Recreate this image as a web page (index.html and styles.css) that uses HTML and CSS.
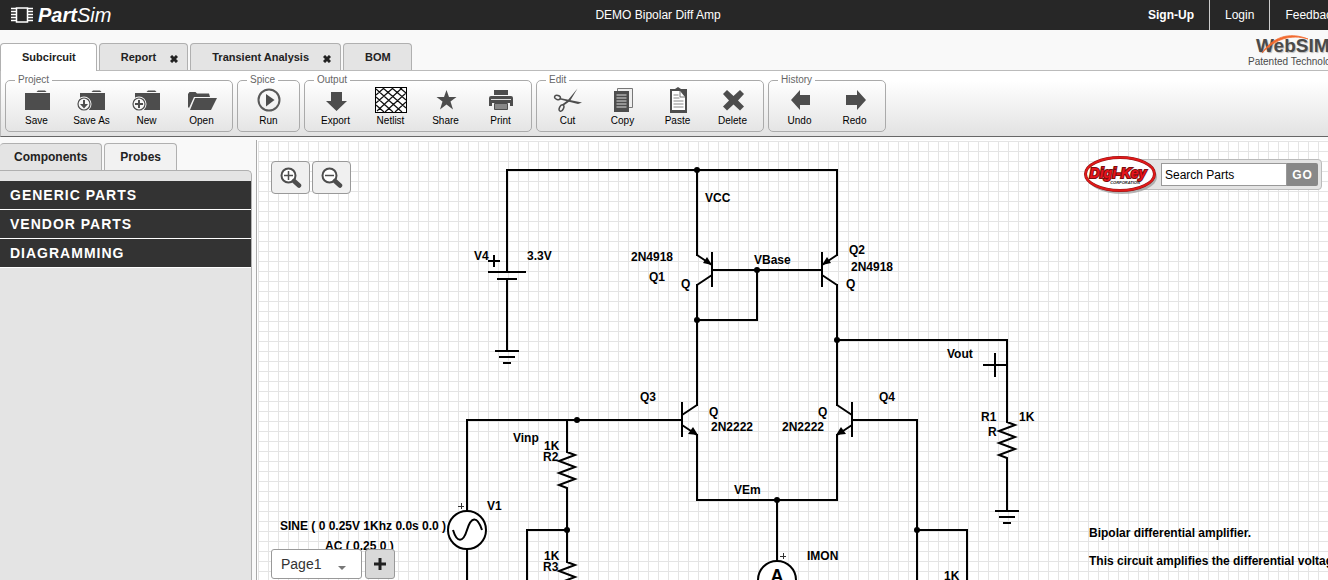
FILE: index.html
```
<!DOCTYPE html>
<html lang="en">
<head>
    <meta charset="UTF-8">
    <meta name="viewport" content="width=device-width, initial-scale=1.0">
    <title>PartSim - DEMO Bipolar Diff Amp</title>
    <link rel="stylesheet" href="styles.css">
</head>
<body>
    <header class="topbar">
        <a href="#" class="logo">
            <svg width="22" height="16" viewBox="0 0 22 16">
                <path d="M0 1.5h5M0 4.5h5M0 7.5h5M0 10.5h5M0 13.5h5M17 1.5h5M17 4.5h5M17 7.5h5M17 10.5h5M17 13.5h5" stroke="#fff" stroke-width="1.5"/>
                <rect x="5.5" y="1" width="11" height="14" fill="none" stroke="#fff" stroke-width="1.5"/>
            </svg>
            <span><b>Part</b>Sim</span>
        </a>
        <div class="project-name">DEMO Bipolar Diff Amp</div>
        <nav class="user-nav">
            <a href="#" class="signup">Sign-Up</a>
            <a href="#">Login</a>
            <a href="#">Feedback</a>
        </nav>
    </header>

    <div class="tabbar">
        <div class="tabs">
            <div class="tab active"><button class="tab-label">Subcircuit</button></div>
            <div class="tab"><button class="tab-label">Report</button><button class="tab-close" aria-label="Close Report"><svg width="8" height="8" viewBox="0 0 8 8"><path d="M1 1l6 6M7 1l-6 6"/></svg></button></div>
            <div class="tab"><button class="tab-label">Transient Analysis</button><button class="tab-close" aria-label="Close Transient Analysis"><svg width="8" height="8" viewBox="0 0 8 8"><path d="M1 1l6 6M7 1l-6 6"/></svg></button></div>
            <div class="tab"><button class="tab-label">BOM</button></div>
        </div>
        <div class="websim">
            <div class="websim-name">WebSIM
                <svg class="swoosh" width="54" height="20" viewBox="0 0 54 20"><path d="M0 19C10 4 26-3 46 5C28 0 14 5 0 19z" fill="#f26a2e" stroke="#f26a2e" stroke-width="0.800"/></svg>
            </div>
            <div class="websim-tag">Patented Technology</div>
        </div>
    </div>

    <div class="toolbar">
        <fieldset>
            <legend>Project</legend>
            <button class="tool">
                <svg viewBox="0 0 34 26"><path d="M5 6h25v17H5z"/><path d="M18 3.500h7l1.500 1.500h-10z"/></svg>
                Save
            </button>
            <button class="tool">
                <svg viewBox="0 0 34 26"><path d="M5 6h25v17H5z"/><path d="M18 3.500h7l1.500 1.500h-10z"/><circle cx="9" cy="17" r="7.500" fill="#f6f6f6"/><circle cx="9" cy="17" r="6" fill="#f6f6f6" stroke="#4d4d4d" stroke-width="1.200"/><path d="M8 13h2v4h3l-4 4.500-4-4.500h3z"/></svg>
                Save As
            </button>
            <button class="tool">
                <svg viewBox="0 0 34 26"><path d="M5 6h25v17H5z"/><path d="M18 3.500h7l1.500 1.500h-10z"/><circle cx="9" cy="17" r="7.500" fill="#f6f6f6"/><circle cx="9" cy="17" r="6" fill="#f6f6f6" stroke="#4d4d4d" stroke-width="1.200"/><path d="M5 16h3v-3h2v3h3v2h-3v3H8v-3H5z"/></svg>
                New
            </button>
            <button class="tool">
                <svg viewBox="0 0 34 26"><path d="M3 7l1.500-2h6l1.500 1.500h12l1 3.500H9L4 21l-1-1z"/><path d="M10 11h22l-6 12H5z"/></svg>
                Open
            </button>
        </fieldset>
        <fieldset>
            <legend>Spice</legend>
            <button class="tool">
                <svg viewBox="0 0 34 26"><circle cx="17" cy="13" r="10.500" fill="none" stroke="#5a5a5a" stroke-width="2"/><path d="M14 7l8.500 6-8.500 6.500z"/></svg>
                Run
            </button>
        </fieldset>
        <fieldset>
            <legend>Output</legend>
            <button class="tool">
                <svg viewBox="0 0 34 26"><path d="M12 5h11v9h5L17.500 24 7 14h5z"/></svg>
                Export
            </button>
            <button class="tool">
                <svg viewBox="0 0 34 26">
                    <rect x="1.500" y="0.500" width="31" height="25" fill="#fff" stroke="#000"/>
                    <path d="M2 18l8 7M2 10l17 15M2 2l26 23M9 1l23 20M18 1l14 12M26 1l6 5M2 8l8-7M2 16L19 1M3 24L28 1M11 25L32 6M21 25l11-10" fill="none" stroke="#111" stroke-width="1.200"/>
                </svg>
                Netlist
            </button>
            <button class="tool">
                <svg viewBox="0 0 34 26"><path d="M17.500 3l2.500 7h7.500l-6 4.500 2.500 8-6.500-5-6.500 5 2.500-8-6-4.500H15z"/></svg>
                Share
            </button>
            <button class="tool">
                <svg viewBox="0 0 34 26"><path d="M10 3h14v5H10z"/><path d="M7 9h20q2 0 2 2v8h-3v-3H8v3H5v-8q0-2 2-2z"/><path d="M7 12.500h20" stroke="#ddd"/><path d="M10.500 16.500h13v6h-13z" fill="#888" stroke="#4d4d4d"/></svg>
                Print
            </button>
        </fieldset>
        <fieldset>
            <legend>Edit</legend>
            <button class="tool">
                <svg viewBox="0 0 34 26"><path d="M26.500 1.500L19 14l-7 5-1-1.500 6-4.500z"/><path d="M31 15.500l-4 1.500-18-4.500V11z"/><ellipse cx="6.500" cy="10.500" rx="3" ry="2" fill="none" stroke="#4d4d4d" stroke-width="1.500" transform="rotate(15 6.500 10.500)"/><ellipse cx="10.500" cy="21" rx="2" ry="3.500" fill="none" stroke="#4d4d4d" stroke-width="1.500" transform="rotate(25 10.500 21)"/></svg>
                Cut
            </button>
            <button class="tool">
                <svg viewBox="0 0 34 26"><path d="M11.500 1.500h15v19h-15z" fill="#eee" stroke="#777"/><path d="M8 4h15v21H8z"/><path d="M10.500 8h10M10.500 11h10M10.500 14h10M10.500 17h10M10.500 20h10" stroke="#ddd"/></svg>
                Copy
            </button>
            <button class="tool">
                <svg viewBox="0 0 34 26"><path d="M9 2h5l3-2 3 2h6v24H9z"/><path d="M11 4h8l5 6v13H11z" fill="#fff"/><path d="M19 4v6h5" fill="none" stroke="#777"/><path d="M12.500 8h5M12.500 11h6M12.500 14h10M12.500 17h10M12.500 20h10" stroke="#888"/></svg>
                Paste
            </button>
            <button class="tool">
                <svg viewBox="0 0 34 26"><path d="M11 3l6.500 6L24 3l4 4-6 6.500 6 6-4 4-6.500-6-6.500 6-4-4 6-6-6-6.500z"/></svg>
                Delete
            </button>
        </fieldset>
        <fieldset>
            <legend>History</legend>
            <button class="tool">
                <svg viewBox="0 0 34 26"><path d="M8 13l9-10v5h10v10H17v5z"/></svg>
                Undo
            </button>
            <button class="tool">
                <svg viewBox="0 0 34 26"><path d="M28 13L19 3v5H8v10h11v5z"/></svg>
                Redo
            </button>
        </fieldset>
    </div>

    <main class="workspace">
        <aside class="sidebar">
            <div class="side-tabs">
                <button class="side-tab active">Components</button>
                <button class="side-tab">Probes</button>
            </div>
            <div class="side-panel">
                <button class="category">Generic Parts</button>
                <button class="category">Vendor Parts</button>
                <button class="category">Diagramming</button>
            </div>
        </aside>

        <section class="canvas">
            <svg class="schematic" width="1400" height="900" viewBox="258 141 1400 900">
                <defs>
                    <pattern id="grid" x="258" y="141" width="10" height="10" patternUnits="userSpaceOnUse">
                        <path d="M0 0.500H10M0.500 0V10" stroke="#e4e4e4"/>
                    </pattern>
                    <path id="resistor" d="M0 0v1l8 3-16 6 16 6-16 6 16 6-16 6 8 3v1"/>
                    <path id="ground" d="M-12 0h24M-8 6h16M-4 12h8"/>
                    <g id="pnp">
                        <path d="M0-18V17M0-5L-15-15M0 5L-15 15"/>
                        <path d="M0-5L-9-7l4-6z" class="fill"/>
                    </g>
                    <g id="npn">
                        <path d="M0-18V17M0-5L15-15M0 5L15 15"/>
                        <path d="M16 15L6 14l5-7z" class="fill"/>
                    </g>
                </defs>
                <rect x="258" y="141" width="1400" height="900" fill="url(#grid)"/>

                <!-- wires -->
                <g class="wire">
                    <path d="M507 272V170H837V255M697 170V255M507 279V351"/>
                    <path d="M697 285V405M697 320H757V270M712 270H822M837 285V405M837 340H1007V421M1007 459V511"/>
                    <path d="M467 511V420H682M567 420V451M567 489V561M567 530H527V640M467 549V640"/>
                    <path d="M697 435V500H837V435M777 500V561M852 420H917V640M917 530H967V640"/>
                </g>

                <!-- parts -->
                <g class="part">
                    <path d="M488 272h38M497 279h20M488 261h12M494 255v12"/>
                    <path d="M983 365h23M995 353v24"/>
                    <use href="#ground" x="507" y="351"/>
                    <use href="#ground" x="1007" y="511"/>
                    <use href="#resistor" x="1007" y="421"/>
                    <use href="#resistor" x="567" y="451"/>
                    <use href="#resistor" x="567" y="561"/>
                    <use href="#pnp" transform="translate(712 270)"/>
                    <use href="#pnp" transform="translate(822 270) scale(-1 1)"/>
                    <use href="#npn" transform="translate(682 420)"/>
                    <use href="#npn" transform="translate(852 420) scale(-1 1)"/>
                    <circle cx="467" cy="530" r="19" class="source"/>
                    <path d="M453 530C457 543 463 543 467 530S477 515 482 530"/>
                    <circle cx="777" cy="580" r="19" class="source"/>
                    <path d="M458 506.500h6M461.500 503v6M780 556.500h6M783.500 553v6" class="polarity"/>
                </g>

                <!-- junctions -->
                <g>
                    <circle cx="697" cy="170" r="3"/>
                    <circle cx="757" cy="270" r="3"/>
                    <circle cx="697" cy="320" r="3"/>
                    <circle cx="837" cy="340" r="3"/>
                    <circle cx="577" cy="420" r="3"/>
                    <circle cx="777" cy="500" r="3"/>
                    <circle cx="567" cy="530" r="3"/>
                    <circle cx="917" cy="530" r="3"/>
                </g>

                <!-- labels -->
                <g class="label">
                    <text x="705" y="202">VCC</text>
                    <text x="474" y="260">V4</text>
                    <text x="527" y="260">3.3V</text>
                    <text x="631" y="261">2N4918</text>
                    <text x="649" y="281">Q1</text>
                    <text x="681" y="288">Q</text>
                    <text x="754" y="264">VBase</text>
                    <text x="849" y="254">Q2</text>
                    <text x="851" y="271">2N4918</text>
                    <text x="846" y="288">Q</text>
                    <text x="947" y="358">Vout</text>
                    <text x="981" y="421">R1</text>
                    <text x="1019" y="421">1K</text>
                    <text x="988" y="436">R</text>
                    <text x="640" y="401">Q3</text>
                    <text x="709" y="416">Q</text>
                    <text x="711" y="431">2N2222</text>
                    <text x="879" y="401">Q4</text>
                    <text x="818" y="416">Q</text>
                    <text x="782" y="431">2N2222</text>
                    <text x="513" y="442">Vinp</text>
                    <text x="544" y="450">1K</text>
                    <text x="543" y="461">R2</text>
                    <text x="544" y="560">1K</text>
                    <text x="543" y="571">R3</text>
                    <text x="487" y="510">V1</text>
                    <text x="280" y="530">SINE ( 0 0.25V 1Khz 0.0s 0.0 )</text>
                    <text x="325" y="550">AC ( 0.25 0 )</text>
                    <text x="734" y="494">VEm</text>
                    <text x="807" y="560">IMON</text>
                    <text x="777" y="582" class="meter">A</text>
                    <text x="944" y="580">1K</text>
                    <text x="1089" y="537">Bipolar differential amplifier.</text>
                    <text x="1089" y="565">This circuit amplifies the differential voltage</text>
                </g>
            </svg>

            <div class="zoom-controls">
                <button aria-label="Zoom in">
                    <svg width="22" height="22" viewBox="0 0 22 22"><circle cx="8.500" cy="8.500" r="7" fill="#fff" stroke="#4d4d4d" stroke-width="2"/><path d="M8.500 4v9M4 8.500h9" stroke="#4d4d4d" stroke-width="1.500"/><path d="M14 14l5 4.500" stroke="#4d4d4d" stroke-width="4.500" stroke-linecap="round"/></svg>
                </button>
                <button aria-label="Zoom out">
                    <svg width="22" height="22" viewBox="0 0 22 22"><circle cx="8.500" cy="8.500" r="7" fill="#fff" stroke="#4d4d4d" stroke-width="2"/><path d="M4 8.500h9" stroke="#4d4d4d" stroke-width="1.500"/><path d="M14 14l5 4.500" stroke="#4d4d4d" stroke-width="4.500" stroke-linecap="round"/></svg>
                </button>
            </div>

            <form class="part-search">
                <svg class="digikey" width="76" height="42" viewBox="0 0 76 42">
                    <ellipse cx="39" cy="22" rx="35" ry="17" fill="#999" opacity="0.700"/>
                    <ellipse cx="37" cy="19" rx="34.500" ry="16.500" fill="#fff" stroke="#8d1414" stroke-width="3"/>
                    <ellipse cx="37" cy="19" rx="34.500" ry="16.500" fill="none" stroke="#e01a1a" stroke-width="2"/>
                    <text x="35" y="23" class="digikey-name">Digi-Key</text>
                    <text x="42" y="29" class="digikey-corp">CORPORATION</text>
                </svg>
                <input type="text" value="Search Parts" aria-label="Search Parts">
                <button type="submit">GO</button>
            </form>

            <div class="page-controls">
                <div class="page-select">
                    <select aria-label="Page">
                        <option>Page1</option>
                    </select>
                </div>
                <button aria-label="Add page">
                    <svg width="12" height="12" viewBox="0 0 12 12"><path d="M6 0v12M0 6h12" stroke="#222" stroke-width="3"/></svg>
                </button>
            </div>
        </section>
    </main>
</body>
</html>
```
FILE: styles.css
```
* {
    box-sizing: border-box;
}
body {
    margin: 0;
    height: 100vh;
    display: flex;
    flex-direction: column;
    overflow: hidden;
    font-family: Arial, "Liberation Sans", sans-serif;
    font-size: 12px;
    color: #222;
    background-color: #f9f9f9;
}
button, input, select {
    font-family: inherit;
    margin: 0;
}
button {
    cursor: pointer;
}

/* top bar */
.topbar {
    flex: none;
    display: flex;
    align-items: center;
    height: 30px;
    background-color: #272727;
    color: #fff;
}
.topbar a {
    color: #fff;
    text-decoration: none;
}
.logo {
    display: flex;
    align-items: center;
    gap: 5px;
    width: 184px;
    padding-left: 11px;
    font-size: 20px;
    font-style: italic;
    line-height: 30px;
}
.project-name {
    flex: 1;
    text-align: center;
}
.user-nav {
    display: flex;
    width: 196px;
    line-height: 30px;
    white-space: nowrap;
}
.user-nav a {
    flex: none;
    padding: 0 15px;
    border-left: 1px solid #ccc;
}
.user-nav .signup {
    border-left-color: transparent;
    font-weight: bold;
}

/* document tabs */
.tabbar {
    flex: none;
    display: flex;
    justify-content: space-between;
    align-items: flex-end;
    height: 41px;
    border-bottom: 1px solid #bbb;
}
.tabs {
    display: flex;
    gap: 2px;
}
.tab {
    display: flex;
    align-items: center;
    height: 27px;
    border: 1px solid #b0b0b0;
    border-bottom: none;
    border-radius: 4px 4px 0 0;
    background-color: #e4e4e4;
}
.tab.active {
    height: 28px;
    margin-bottom: -1px;
    padding-bottom: 1px;
    background-color: #fff;
}
.tab-label {
    padding: 0 20px 0 21px;
    border: none;
    background: none;
    color: #222;
    font-size: 11px;
    font-weight: bold;
    line-height: 26px;
}
.tab-close {
    display: flex;
    margin-left: -6px;
    padding: 4px 9px 0 0;
    border: none;
    background: none;
}
.tab-close path {
    stroke: #222;
    stroke-width: 3;
}
.websim {
    width: 80px;
    padding-bottom: 2px;
    color: #4a4a4a;
    white-space: nowrap;
}
.websim-name {
    position: relative;
    padding-left: 8px;
    font-size: 19px;
    font-weight: bold;
    line-height: 20px;
    text-shadow: 1px 1px 1px #bbb;
}
.swoosh {
    position: absolute;
    left: 14px;
    top: -2px;
}
.websim-tag {
    font-size: 10px;
    line-height: 12px;
}

/* toolbar */
.toolbar {
    flex: none;
    display: flex;
    gap: 4px;
    padding: 3px 4px 4px;
    border-left: 1px solid #bbb;
    border-bottom: 1px solid #666;
    background: linear-gradient(#fff 15%, #e2e2e2);
}
fieldset {
    display: flex;
    margin: 0;
    padding: 0 3px;
    border: 1px solid #aaa;
    border-radius: 5px;
}
legend {
    margin-left: 6px;
    padding: 0 3px;
    color: #666;
    font-size: 10px;
    line-height: 12px;
}
.tool {
    display: flex;
    flex-direction: column;
    align-items: center;
    width: 55px;
    padding: 1px 0 3px;
    border: none;
    background: none;
    color: #000;
    font-size: 10px;
    line-height: 15px;
}
.tool svg {
    width: 34px;
    height: 26px;
    fill: #4d4d4d;
}

/* sidebar */
.workspace {
    flex: 1;
    display: flex;
    min-height: 0;
}
.sidebar {
    display: flex;
    flex-direction: column;
    width: 252px;
    margin-right: 4px;
    padding-top: 6px;
}
.side-tabs {
    display: flex;
    gap: 2px;
}
.side-tab {
    height: 27px;
    padding: 0 15px;
    border: 1px solid #b0b0b0;
    border-bottom: none;
    border-radius: 4px 4px 0 0;
    background-color: #f2f2f2;
    color: #222;
    font-size: 12px;
    font-weight: bold;
}
.side-tab.active {
    height: 28px;
    margin-bottom: -1px;
    padding: 0 14px 1px;
    border-left: none;
    background-color: #e4e4e4;
}
.side-panel {
    flex: 1;
    padding-top: 10px;
    border: 1px solid #b0b0b0;
    border-width: 1px 1px 0 0;
    border-radius: 0 5px 0 0;
    background-color: #e4e4e4;
}
.category {
    display: block;
    width: 100%;
    height: 29px;
    padding: 0 10px;
    border: none;
    border-bottom: 1px solid #fff;
    background-color: #333;
    color: #fff;
    font-size: 14px;
    font-weight: bold;
    letter-spacing: 1px;
    text-align: left;
    text-transform: uppercase;
}

/* schematic */
.canvas {
    flex: 1;
    position: relative;
    min-width: 0;
    margin-top: 3px;
    padding: 1px 0 0 1px;
    border-left: 1px solid #aaa;
    background-color: #fff;
    overflow: hidden;
}
.schematic {
    display: block;
}
.wire, .part {
    fill: none;
    stroke: #000;
    stroke-width: 2;
}
.wire {
    stroke-linecap: square;
}
.fill {
    fill: #000;
    stroke: none;
}
.source {
    fill: #fff;
}
.polarity {
    stroke: #333;
    stroke-width: 1;
}
.label {
    font-size: 12px;
    font-weight: bold;
}
.meter {
    font-size: 18px;
    text-anchor: middle;
}

/* controls over the schematic */
.zoom-controls {
    position: absolute;
    left: 14px;
    top: 21px;
    display: flex;
    gap: 2px;
}
.zoom-controls button {
    display: flex;
    align-items: center;
    justify-content: center;
    width: 39px;
    height: 33px;
    padding: 0;
    border: 1px solid #999;
    border-radius: 4px;
    background-color: #f0f0f0;
}
.part-search {
    position: absolute;
    top: 19px;
    right: 6px;
    display: flex;
    align-items: center;
    height: 31px;
    padding: 0 3px 0 52px;
    border: 1px solid #bbb;
    border-radius: 4px;
    background-color: #e4e4e4;
}
.part-search input {
    width: 126px;
    height: 23px;
    padding: 0 3px;
    border: 1px solid #999;
    background-color: #fff;
    color: #000;
    font-size: 12px;
}
.part-search button {
    width: 31px;
    height: 23px;
    padding: 0;
    border: none;
    border-radius: 0 2px 2px 0;
    background-color: #888;
    color: #fff;
    font-size: 12px;
    font-weight: bold;
    letter-spacing: 1px;
}
.digikey {
    position: absolute;
    left: -26px;
    top: -5px;
}
.digikey-name {
    fill: #e8141c;
    stroke: #7a0d0d;
    stroke-width: 2;
    paint-order: stroke;
    font-size: 14px;
    font-style: italic;
    font-weight: bold;
    text-anchor: middle;
}
.digikey-corp {
    fill: #222;
    font-size: 4px;
    font-style: italic;
    font-weight: bold;
    text-anchor: middle;
}
.page-controls {
    position: absolute;
    left: 14px;
    bottom: 1px;
    display: flex;
    gap: 3px;
}
.page-select {
    position: relative;
}
.page-select::after {
    content: "";
    position: absolute;
    right: 16px;
    top: 17px;
    border: 4px solid transparent;
    border-top-color: #777;
    border-bottom: none;
    pointer-events: none;
}
.page-select select {
    appearance: none;
    width: 91px;
    height: 30px;
    padding: 0 9px;
    border: 1px solid #999;
    border-radius: 3px;
    background-color: #fff;
    color: #333;
    font-size: 14px;
}
.page-controls button {
    display: flex;
    align-items: center;
    justify-content: center;
    width: 30px;
    height: 30px;
    padding: 0;
    border: 1px solid #999;
    border-radius: 3px;
    background-color: #d9d9d9;
}
```
